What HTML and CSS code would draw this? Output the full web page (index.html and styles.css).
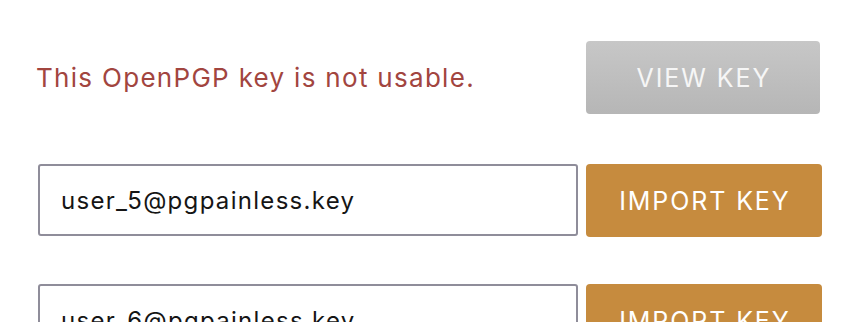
FILE: index.html
```html
<!DOCTYPE html>
<html>
<head>
<meta charset="utf-8">
<link rel="stylesheet" href="styles.css">
</head>
<body>
<div class="page">
  <div class="row status-row">
    <div class="error">This OpenPGP key is not usable.</div>
    <button class="btn btn-gray">VIEW KEY</button>
  </div>
  <div class="row first-key">
    <div class="field">user_5@pgpainless.key</div>
    <button class="btn btn-orange">IMPORT KEY</button>
  </div>
  <div class="row">
    <div class="field">user_6@pgpainless.key</div>
    <button class="btn btn-orange">IMPORT KEY</button>
  </div>
</div>
</body>
</html>
```
FILE: styles.css
```css
html, body {
  margin: 0;
  padding: 0;
  background: #ffffff;
  overflow: hidden;
}
.page {
  padding: 41px 36px 0 38px;
  display: flex;
  flex-direction: column;
  gap: 47px;
}
.row {
  display: flex;
  align-items: stretch;
  gap: 8px;
  height: 73px;
}
.first-key {
  margin-top: 3px;
}
.status-row {
  align-items: center;
  padding-right: 2px;
}
.error {
  flex: 1;
  margin-left: -2px;
  font-family: Inter, sans-serif;
  font-size: 26px;
  letter-spacing: 1.3px;
  color: #a2453f;
}
.field {
  height: 68px;
  border: 2px solid #8f8d9a;
  border-radius: 3px;
  box-sizing: content-box;
  display: flex;
  align-items: center;
  padding-left: 21px;
  width: 515px;
  font-family: Inter, sans-serif;
  font-size: 24px;
  letter-spacing: 1.3px;
  color: #151515;
}
.btn {
  border: none;
  border-radius: 4px;
  font-family: Inter, sans-serif;
  font-size: 25px;
  letter-spacing: 1.9px;
  text-indent: 1.9px;
  color: #ffffff;
  padding: 0;
  cursor: pointer;
}
.btn-gray {
  width: 234px;
  height: 73px;
  background: linear-gradient(#c7c7c7, #b6b6b6);
  color: #f6f6f6;
}
.btn-orange {
  width: 236px;
  height: 73px;
  background: #c68b3e;
}
```
